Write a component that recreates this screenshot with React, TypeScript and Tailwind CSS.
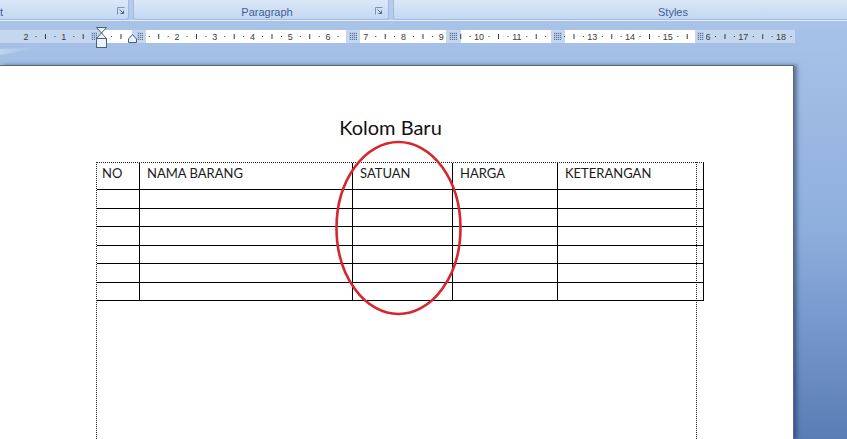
const ticks = Array.from({ length: 21 }, (_, i) => i - 2);
const cm = 37.75;
const zero = 101.6;

const whiteSegs: [number, number][] = [
  [103, 132],
  [146, 346],
  [360, 446],
  [461, 551],
  [565, 696],
];

const markers: [number, number][] = [
  [91, 6],
  [137, 6],
  [349, 8],
  [449, 8],
  [554, 8],
  [697, 7],
];

const Launcher = () => (
  <svg width="8" height="8" viewBox="0 0 8 8" className="block">
    <path d="M0.5 7.5V0.5H7.5" fill="none" stroke="#7d93b4" />
    <path d="M2.5 2.5L6.5 6.5M6.5 3.5V6.5H3.5" fill="none" stroke="#4f6688" />
  </svg>
);

const Group = ({
  label,
  className,
  launcher,
}: {
  label: string;
  className: string;
  launcher?: string;
}) => (
  <div
    className={`relative h-[20px] shrink-0 rounded-b-[3px] border border-t-0 border-[#9fbbe0] bg-gradient-to-b from-[#dbe7f6] to-[#c3d8f1] flex justify-center pt-[5px] text-[11px] leading-[14px] text-[#3d609a] ${className}`}
  >
    {label}
    {launcher && (
      <div className={`absolute top-[7px] ${launcher}`}>
        <Launcher />
      </div>
    )}
  </div>
);

const Ruler = () => (
  <svg width="847" height="44" className="block shrink-0">
    <defs>
      <pattern id="grid" width="2" height="2" patternUnits="userSpaceOnUse">
        <rect width="2" height="2" fill="#b3c7e4" />
        <rect width="1" height="1" fill="#5c7196" />
      </pattern>
      <linearGradient id="streak" x1="0" y1="0" x2="1" y2="0">
        <stop offset="0" stopColor="#c3d5ee" />
        <stop offset="1" stopColor="#a9c3e7" stopOpacity="0" />
      </linearGradient>
    </defs>
    <polygon points="0,28 45,26 0,34" fill="url(#streak)" />
    <rect x="0" y="9" width="795" height="13" fill="#c5d7ef" />
    {whiteSegs.map(([a, b]) => (
      <rect key={a} x={a} y="9" width={b - a} height="13" fill="#ffffff" />
    ))}
    {ticks.map((k) => {
      const x = zero + k * cm;
      return (
        <g key={k} fill="#3a3a3a">
          {k !== 0 && k !== 12 && (
            <text
              x={x}
              y="19"
              fontSize="9"
              textAnchor="middle"
              fontFamily="'Liberation Sans', sans-serif"
            >
              {k < 0 ? -k : k}
            </text>
          )}
          <rect x={x + cm * 0.25} y="15" width="1" height="1" />
          <rect x={x + cm * 0.5} y="13" width="1" height="5" />
          <rect x={x + cm * 0.75} y="15" width="1" height="1" />
        </g>
      );
    })}
    <rect x="795" y="9" width="52" height="13" fill="#a6c0e6" />
    {markers.map(([x, w]) => (
      <g key={x}>
        <rect x={x - 2} y="9" width={w + 4} height="13" fill="#c5d7ef" />
        <rect x={x} y="11" width={w} height="8" fill="url(#grid)" />
      </g>
    ))}
    <polygon
      points="96.5,6.5 106.5,6.5 101.5,12 106.5,17.5 96.5,17.5 101.5,12"
      fill="#eef3fa"
      stroke="#4d5f7f"
    />
    <rect x="96.5" y="17.5" width="10" height="9" fill="#eef3fa" stroke="#4d5f7f" />
    <polygon points="128.5,21.5 136.5,21.5 136.5,18 132.5,13.5 128.5,18" fill="#eef3fa" stroke="#4d5f7f" />
  </svg>
);

const headers = ["NO", "NAMA BARANG", "SATUAN", "HARGA", "KETERANGAN"];
const rowHeights = ["h-[19px]", "h-[18px]", "h-[19px]", "h-[18px]", "h-[19px]", "h-[18px]"];

export default function App() {
  return (
    <div className="w-[847px] h-[439px] overflow-hidden flex flex-col bg-[#b9cfec] font-['Liberation_Sans',sans-serif]">
      <div className="h-[21px] shrink-0 flex gap-[4px] border-b border-[#e3edf9] bg-[#b5cbe9]">
        <Group label="Font" className="ml-[-145px] w-[274px]" launcher="right-[3px]" />
        <Group label="Paragraph" className="w-[256px] pl-[12px]" launcher="right-[5px]" />
        <Group label="Styles" className="w-[560px]" />
      </div>

      <div className="flex-1 min-h-0 flex flex-col bg-gradient-to-b from-[#a9c3e8] via-[#8eaedd] to-[#5a7db6]">
        <Ruler />

        <div className="flex-1 min-h-0 flex">
          <div className="relative w-[794px] shrink-0 bg-white border-t border-r border-[#5b6678] shadow-[3px_0_4px_rgba(30,50,90,0.55)] flex flex-col">
            <div className="mt-[46px] h-[30px] leading-[30px] text-center pr-[12px] text-[20px] text-[#111] font-['Lato',sans-serif]">
              Kolom Baru
            </div>

            <div className="mt-[20px] ml-[96px] w-[601px] flex-1 border-x border-dotted border-[#222]">
              <div className="w-[607px] border-t border-dotted border-[#222] font-['Lato',sans-serif] text-[13px] leading-[16px] text-[#1a1a1a]">
                <div className="grid grid-cols-[43px_213px_100px_105px_146px] h-[27px]">
                  {headers.map((h, i) => (
                    <div
                      key={h}
                      className={`border-r border-b border-black pt-[2px] ${i === 0 ? "pl-[5px]" : "pl-[7px]"}`}
                    >
                      {h}
                    </div>
                  ))}
                </div>
                {rowHeights.map((rh, i) => (
                  <div key={i} className={`grid grid-cols-[43px_213px_100px_105px_146px] ${rh}`}>
                    {headers.map((h) => (
                      <div key={h} className="border-r border-b border-black" />
                    ))}
                  </div>
                ))}
              </div>
            </div>

            <svg
              width="136"
              height="182"
              className="absolute left-[330px] top-[72px]"
              viewBox="0 0 136 182"
            >
              <ellipse cx="68.5" cy="90" rx="62" ry="86" fill="none" stroke="#d7262f" strokeWidth="2.6" />
            </svg>
          </div>
          <div className="flex-1" />
        </div>
      </div>
    </div>
  );
}
